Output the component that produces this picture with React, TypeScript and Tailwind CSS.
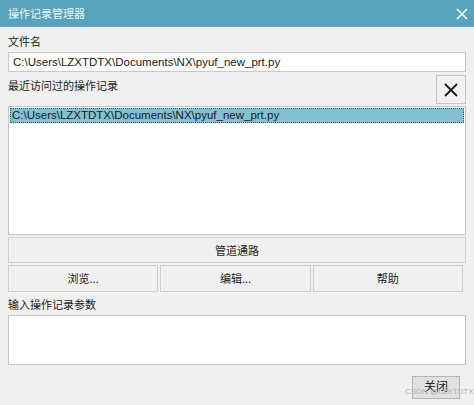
import React from "react";

const cjk = { fontFamily: '"Noto Sans CJK SC", "Noto Sans", sans-serif' };
const lat = { fontFamily: '"Liberation Sans", "Noto Sans CJK SC", sans-serif' };

function Btn({ children, className = "" }: { children: React.ReactNode; className?: string }) {
  return (
    <div
      className={`flex items-center justify-center border border-[#cfcfcf] bg-[#f0f0f0] text-[11px] text-[#222] ${className}`}
      style={cjk}
    >
      {children}
    </div>
  );
}

export default function App() {
  const path = "C:\\Users\\LZXTDTX\\Documents\\NX\\pyuf_new_prt.py";
  return (
    <div className="relative flex h-[405px] w-[474px] flex-col overflow-hidden bg-[#f0f0f0]">
      <div className="flex h-[27px] shrink-0 items-center justify-between bg-[#57a2bc] pl-[8px] pr-[6px]">
        <span className="text-[11px] text-[#eef6f9]" style={cjk}>操作记录管理器</span>
        <svg width="12" height="12" viewBox="0 0 12 12">
          <path d="M1 1 L11 11 M11 1 L1 11" stroke="#ffffff" strokeWidth="1.6" />
        </svg>
      </div>
      <div className="flex flex-col px-[8px] pr-[8px]">
        <div className="mt-[5px] h-[18px] text-[11px] leading-[18px] text-[#222]" style={cjk}>文件名</div>
        <div
          className="mt-[2px] h-[20px] border border-[#c8c8c8] bg-white pl-[4px] text-[11.5px] leading-[18px] text-[#1a1a1a]"
          style={lat}
        >
          {path}
        </div>
        <div className="mt-[3px] flex items-start justify-between">
          <div className="mt-[1px] text-[11px] leading-[18px] text-[#222]" style={cjk}>最近访问过的操作记录</div>
          <div className="flex h-[29px] w-[30px] items-center justify-center border border-[#c4c4c4] bg-[#f0f0f0]">
            <svg width="16" height="16" viewBox="0 0 16 16">
              <path d="M2 2 L14 14 M14 2 L2 14" stroke="#1a1a1a" strokeWidth="1.8" />
            </svg>
          </div>
        </div>
        <div className="mt-[2px] h-[129px] border border-[#c4c4c4] bg-white p-[1px]">
          <div
            className="h-[15px] border border-dotted border-[#3a5a66] bg-[#84c0d1] pl-[1px] text-[11.5px] leading-[13px] text-[#1a1a1a]"
            style={lat}
          >
            {path}
          </div>
        </div>
        <Btn className="mt-[2px] h-[26px]">管道通路</Btn>
        <div className="mt-[2px] flex h-[27px] gap-[2px] pr-[3px]">
          <Btn className="flex-1">浏览...</Btn>
          <Btn className="flex-1">编辑...</Btn>
          <Btn className="flex-1">帮助</Btn>
        </div>
        <div className="mt-[3px] h-[18px] text-[11px] leading-[18px] text-[#222]" style={cjk}>输入操作记录参数</div>
        <div className="mt-[2px] h-[50px] border border-[#c4c4c4] bg-white" />
        <div className="mt-[11px] flex justify-end pr-[6px]">
          <div
            className="flex h-[23px] w-[48px] items-center justify-center border border-[#b4b4b4] bg-[#e1e1e1] pb-[4px] text-[12px] text-[#222]"
            style={cjk}
          >
            关闭
          </div>
        </div>
      </div>
      <div
        className="absolute left-[405px] top-[388px] whitespace-nowrap text-[8px] leading-[8px] text-[#b0b0b0]"
        style={lat}
      >
        CSDN @LZXTDTX
      </div>
    </div>
  );
}
